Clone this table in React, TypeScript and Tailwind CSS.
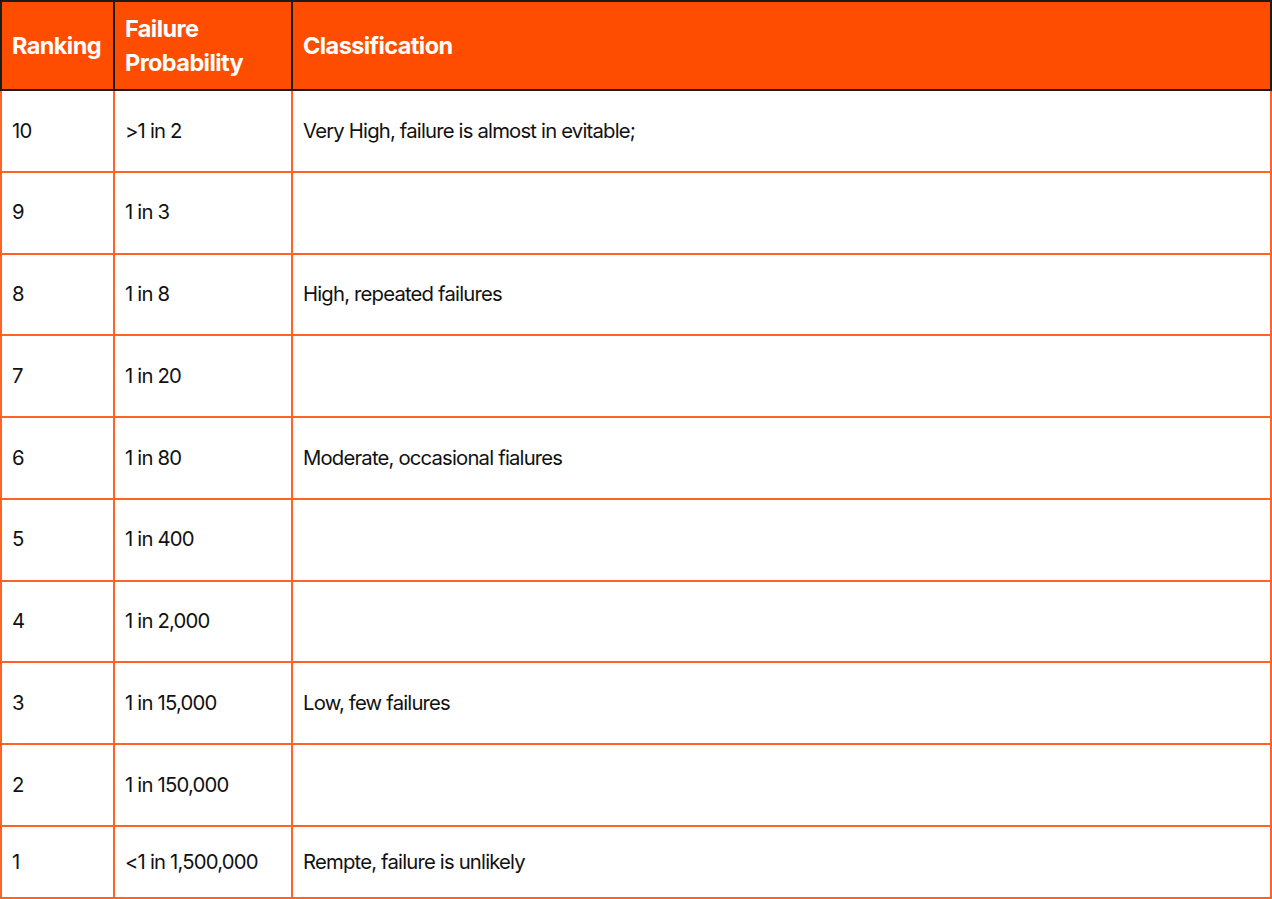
const rows: [string, string, string][] = [
  ['10', '>1 in 2', 'Very High, failure is almost in evitable;'],
  ['9', '1 in 3', ''],
  ['8', '1 in 8', 'High, repeated failures'],
  ['7', '1 in 20', ''],
  ['6', '1 in 80', 'Moderate, occasional fialures'],
  ['5', '1 in 400', ''],
  ['4', '1 in 2,000', ''],
  ['3', '1 in 15,000', 'Low, few failures'],
  ['2', '1 in 150,000', ''],
  ['1', '<1 in 1,500,000', 'Rempte, failure is unlikely'],
];

export default function App() {
  return (
    <div className="w-[1272px] h-[899px] overflow-hidden bg-white font-['Inter',sans-serif]">
      {/* header */}
      <div className="grid grid-cols-[113px_178px_1fr] h-[91px] bg-[#FF4D00] border-2 border-[#1c1c1c] text-white font-bold text-[23.5px] leading-[34px] tracking-[-0.025em]">
        <div className="flex items-center pl-[10px] border-r-2 border-[#1c1c1c]">Ranking</div>
        <div className="flex items-center pl-[10px] border-r-2 border-[#1c1c1c]">
          <span>
            Failure
            <br />
            Probability
          </span>
        </div>
        <div className="flex items-center pl-[10px]">Classification</div>
      </div>

      {/* body */}
      {rows.map(([rank, prob, cls], i) => (
        <div
          key={rank}
          className={`grid grid-cols-[113px_178px_1fr] border-x-2 border-b-2 border-[#FF6424] text-[20.3px] text-[#111] tracking-[-0.04em] ${
            i === rows.length - 1 ? 'h-[72px]' : 'h-[81.75px]'
          }`}
        >
          <div className="flex items-center pl-[10px] border-r-2 border-[#FF6424]">{rank}</div>
          <div className="flex items-center pl-[10px] border-r-2 border-[#FF6424]">{prob}</div>
          <div className="flex items-center pl-[10px]">{cls}</div>
        </div>
      ))}
    </div>
  );
}
